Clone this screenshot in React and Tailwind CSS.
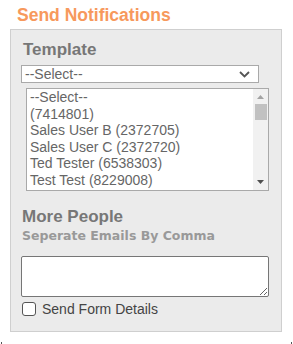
import React from 'react';

const templates = [
    '--Select--',
    '(7414801)',
    'Sales User B (2372705)',
    'Sales User C (2372720)',
    'Ted Tester (6538303)',
    'Test Test (8229008)'
];

function App() {
    return (
        <div className="w-[293px] h-[344px] bg-white overflow-hidden" style={{ fontFamily: '"Liberation Sans", Arial, sans-serif' }}>
            <h1 className="pl-[17px] pt-[6px] h-[29px] text-[17.5px] leading-[19px] font-bold text-[#f7995c]">
                Send Notifications
            </h1>

            <div className="ml-[10px] w-[272px] h-[303px] border border-[#cfcfcf] bg-[#ebebeb]">
                <h2 className="pl-[12px] pt-[10px] h-[35px] text-[17px] leading-[19px] font-bold text-[#777777]">
                    Template
                </h2>

                <div className="ml-[10px] w-[238px] h-[18px] bg-white border border-[#a9a9a9] flex items-center justify-between pl-[3px] pr-[8px]">
                    <span className="text-[14px] leading-[16px] text-[#666666]">--Select--</span>
                    <svg width="11" height="7" viewBox="0 0 11 7" fill="none">
                        <path d="M1 1l4.5 4.5L10 1" stroke="#555555" strokeWidth="1.8" />
                    </svg>
                </div>

                <div className="ml-[15px] mt-[5px] w-[243px] h-[103px] bg-white border border-[#a9a9a9] flex">
                    <ul className="flex-1 pl-[3px]">
                        {templates.map(t => (
                            <li key={t} className="text-[14px] leading-[16.6px] text-[#666666] whitespace-nowrap">
                                {t}
                            </li>
                        ))}
                    </ul>
                    <div className="w-[15px] bg-[#f1f1f1] flex flex-col items-center">
                        <svg className="mt-[6px]" width="7" height="4" viewBox="0 0 7 4">
                            <path d="M0 4L3.5 0L7 4Z" fill="#a3a3a3" />
                        </svg>
                        <div className="mt-[5px] w-[12px] h-[16px] bg-[#c1c1c1]" />
                        <div className="flex-1" />
                        <svg className="mb-[6px]" width="7" height="4" viewBox="0 0 7 4">
                            <path d="M0 0L7 0L3.5 4Z" fill="#505050" />
                        </svg>
                    </div>
                </div>

                <h2 className="pl-[11px] mt-[16px] text-[17px] leading-[19px] font-bold text-[#777777]">
                    More People
                </h2>
                <p className="pl-[11px] mt-[3px] text-[12.5px] leading-[14px] font-bold text-[#999999]" style={{ fontFamily: '"DejaVu Sans", Verdana, sans-serif' }}>
                    Seperate Emails By Comma
                </p>

                <textarea
                    className="block ml-[10px] mt-[13px] w-[248px] h-[41px] bg-white border border-[#767676] rounded-[2px] outline-none"
                />

                <label className="flex items-center ml-[11px] mt-[4px] gap-[6px]">
                    <span className="w-[14px] h-[14px] bg-white border border-[#555555] rounded-[3px]" />
                    <span className="text-[14px] leading-[16px] text-[#444444]">Send Form Details</span>
                </label>
            </div>

            <div className="ml-[1px] mt-[10px] w-[291px] h-[3px] border-x border-[#555555]" />
        </div>
    );
}

export default App;
